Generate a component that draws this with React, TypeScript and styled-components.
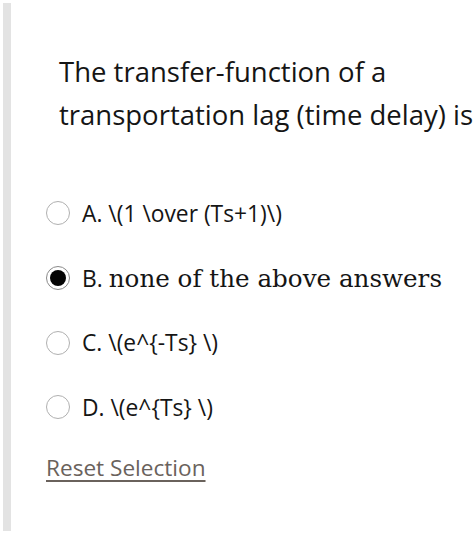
import React, { useState } from 'react';
import styled, { createGlobalStyle } from 'styled-components';

const GlobalStyle = createGlobalStyle`
  html, body {
    margin: 0;
    padding: 0;
    background: #fff;
  }
  body {
    font-family: 'Open Sans', 'Liberation Sans', sans-serif;
    color: #111;
  }
`;

const Page = styled.div`
  width: 474px;
  height: 533px;
  padding: 3px 0 0 3px;
  box-sizing: border-box;
`;

const Panel = styled.div`
  height: 528px;
  border-left: 8px solid #e3e3e3;
  padding: 47px 0 0 48px;
  box-sizing: border-box;
`;

const Question = styled.div`
  font-size: 27.5px;
  line-height: 43px;
  color: #151515;
  white-space: nowrap;
  margin-bottom: 45px;
`;

const Options = styled.div`
  display: flex;
  flex-direction: column;
  margin-left: -13px;
`;

const Option = styled.label`
  display: flex;
  align-items: center;
  gap: 12px;
  height: 64.7px;
  font-size: 22.8px;
  color: #151515;
  cursor: pointer;
`;

const Radio = styled.span<{ $checked: boolean }>`
  width: 24px;
  height: 24px;
  border-radius: 50%;
  border: 1.5px solid ${(p) => (p.$checked ? '#8a8a8a' : '#b0b0b0')};
  box-sizing: border-box;
  display: flex;
  align-items: center;
  justify-content: center;
  flex-shrink: 0;
  &::after {
    content: '';
    width: 16px;
    height: 16px;
    border-radius: 50%;
    background: #050505;
    display: ${(p) => (p.$checked ? 'block' : 'none')};
  }
`;

const Serif = styled.span`
  font-family: 'DejaVu Serif', 'Liberation Serif', serif;
  font-size: 24.6px;
  margin-left: 6px;
`;

const Reset = styled.a`
  display: inline-block;
  margin: 12px 0 0 -13px;
  font-size: 22.6px;
  color: #6a625c;
  text-decoration: underline;
  text-underline-offset: 4px;
  text-decoration-thickness: 1.5px;
  cursor: pointer;
`;

const options = [
  { key: 'A', text: '\\(1 \\over (Ts+1)\\)' },
  { key: 'B', text: 'none of the above answers', serif: true },
  { key: 'C', text: '\\(e^{-Ts} \\)' },
  { key: 'D', text: '\\(e^{Ts} \\)' },
];

export default function App() {
  const [selected, setSelected] = useState<string | null>('B');

  return (
    <Page>
      <GlobalStyle />
      <Panel>
        <Question>
          The transfer-function of a
          <br />
          transportation lag (time delay) is
        </Question>
        <Options>
          {options.map((o) => (
            <Option key={o.key} onClick={() => setSelected(o.key)}>
              <Radio $checked={selected === o.key} />
              <span>
                {o.key}.{o.serif ? <Serif>{o.text}</Serif> : ' ' + o.text}
              </span>
            </Option>
          ))}
        </Options>
        <Reset onClick={() => setSelected(null)}>Reset Selection</Reset>
      </Panel>
    </Page>
  );
}
